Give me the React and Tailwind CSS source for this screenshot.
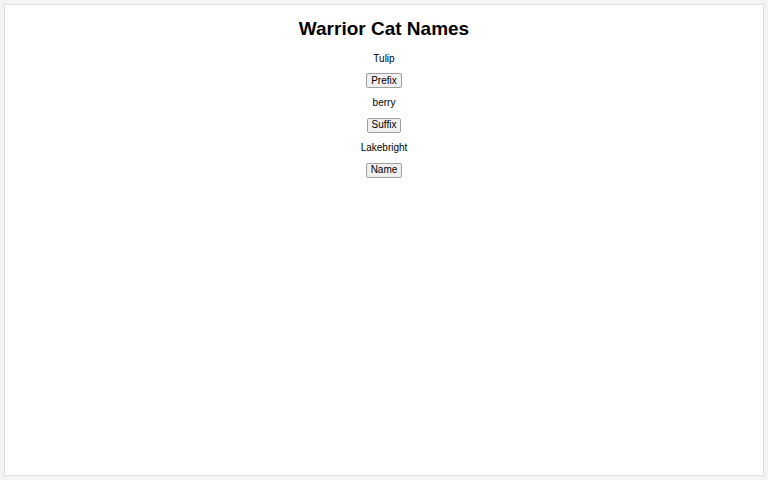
import { useState } from "react";

const prefixes = ["Tulip", "Lake", "Fern", "Ash", "Bramble", "Holly"];
const suffixes = ["berry", "bright", "claw", "pelt", "fur", "tail"];

function pick(list) {
  return list[Math.floor(Math.random() * list.length)];
}

function Row({ children }) {
  return <div className="h-[22.4px] flex items-center justify-center">{children}</div>;
}

function SmallButton({ onClick, children }) {
  return (
    <button
      onClick={onClick}
      className="h-[15px] px-[4px] text-[10px] leading-none text-black bg-[#efefef] border border-[#a0a0a0] rounded-[2px] hover:bg-[#e5e5e5]"
    >
      {children}
    </button>
  );
}

export default function App() {
  const [prefix, setPrefix] = useState("Tulip");
  const [suffix, setSuffix] = useState("berry");
  const [name, setName] = useState("Lakebright");

  return (
    <div className="min-h-[480px] bg-[#f3f3f3] p-[4px] font-['Liberation_Sans',Arial,sans-serif]">
      <div className="h-[472px] bg-white border border-[#dddddd] pt-[12px] flex flex-col items-center">
        <h1 className="h-[24px] leading-[24px] text-[19px] font-bold text-black mb-[6px]">
          Warrior Cat Names
        </h1>
        <div className="flex flex-col text-[10px] text-black">
          <Row>{prefix}</Row>
          <Row>
            <SmallButton onClick={() => setPrefix(pick(prefixes))}>Prefix</SmallButton>
          </Row>
          <Row>{suffix}</Row>
          <Row>
            <SmallButton onClick={() => setSuffix(pick(suffixes))}>Suffix</SmallButton>
          </Row>
          <Row>{name}</Row>
          <Row>
            <SmallButton onClick={() => setName(pick(prefixes) + pick(suffixes))}>Name</SmallButton>
          </Row>
        </div>
      </div>
    </div>
  );
}
